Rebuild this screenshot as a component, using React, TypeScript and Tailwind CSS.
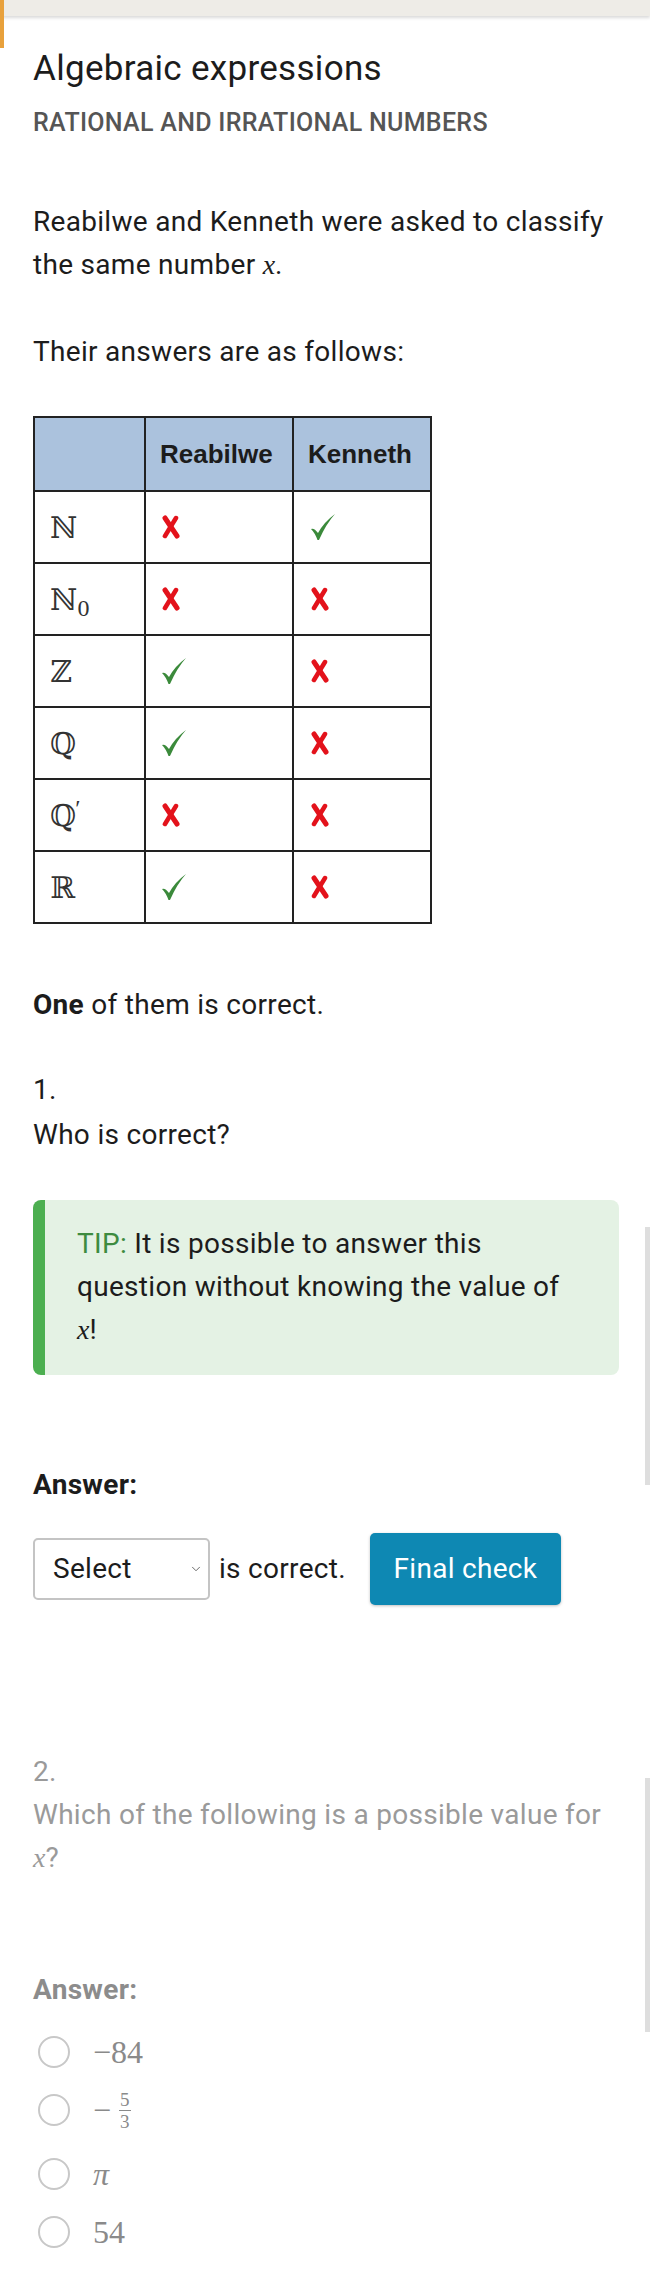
import { ChevronDown } from "lucide-react";

const Cross = () => (
  <svg width="20" height="24" viewBox="0 0 20 24" className="block">
    <path d="M4 3 L16 21" stroke="#e3121b" strokeWidth="5" strokeLinecap="round" />
    <path d="M15 3 L4 21" stroke="#e3121b" strokeWidth="4.5" strokeLinecap="round" />
  </svg>
);

const Check = () => (
  <svg width="26" height="28" viewBox="0 0 26 28" className="block">
    <path
      d="M1 16 Q4 14.5 8 20 Q14 9 25 1 Q16 11 9 27 L7.5 27 Q5 20 1 16 Z"
      fill="#3b8a3b"
    />
  </svg>
);

const rows: { sym: React.ReactNode; r: boolean; k: boolean }[] = [
  { sym: "ℕ", r: false, k: true },
  {
    sym: (
      <>
        ℕ<span className="font-['Liberation_Serif',serif] text-[24px] relative top-[6px]">0</span>
      </>
    ),
    r: false,
    k: false,
  },
  { sym: "ℤ", r: true, k: false },
  { sym: "ℚ", r: true, k: false },
  {
    sym: (
      <>
        ℚ<span className="font-['Liberation_Serif',serif] text-[24px] relative -top-[10px] -ml-[1px]">′</span>
      </>
    ),
    r: false,
    k: false,
  },
  { sym: "ℝ", r: true, k: false },
];

const X = () => <span className="font-['Liberation_Serif',serif] italic tracking-normal">x</span>;

const Radio = ({ children, h }: { children: React.ReactNode; h: string }) => (
  <div className={`flex items-center pl-[5px] ${h}`}>
    <span className="size-[32px] rounded-full border-2 border-[#c8c8c8] bg-white shrink-0" />
    <span className="ml-[23px] font-['Liberation_Serif',serif] text-[32px] leading-none text-[#8a8a8a]">
      {children}
    </span>
  </div>
);

export default function App() {
  return (
    <div className="relative w-[650px] min-h-[2270px] bg-white font-['Roboto',sans-serif] text-[#1c1c1c]">
      {/* top bar */}
      <div className="h-4 bg-[#eeece7] shadow-[0_2px_3px_rgba(0,0,0,0.15)]" />
      <div className="absolute left-0 top-0 w-[4px] h-[48px] bg-[#e8a13c]" />

      {/* scrollbar traces */}
      <div className="absolute right-0 top-[1227px] h-[258px] w-[5px] bg-[#dedede]" />
      <div className="absolute right-0 top-[1778px] h-[254px] w-[5px] bg-[#dedede]" />

      <div className="px-[33px] tracking-[0.3px]">
        <h1 className="mt-[33px] text-[35px] leading-[40px] font-normal">Algebraic expressions</h1>
        <h2 className="mt-[19px] text-[25px] leading-[30px] font-medium text-[#555] uppercase">
          Rational and irrational numbers
        </h2>

        <p className="mt-[62px] text-[28px] leading-[43px]">
          Reabilwe and Kenneth were asked to classify the same number <X />.
        </p>
        <p className="mt-[44px] text-[28px] leading-[43px]">Their answers are as follows:</p>

        {/* table */}
        <table className="mt-[43px] border-collapse border-2 border-[#222] w-[399px] font-['Liberation_Sans',sans-serif] tracking-normal">
          <thead>
            <tr className="h-[74px] bg-[#abc2dd]">
              <th className="w-[111px] border-2 border-[#222]" />
              <th className="w-[148px] border-2 border-[#222] text-left pl-[14px] text-[26px] font-bold">
                Reabilwe
              </th>
              <th className="border-2 border-[#222] text-left pl-[14px] text-[26px] font-bold">Kenneth</th>
            </tr>
          </thead>
          <tbody>
            {rows.map((row, i) => (
              <tr key={i} className="h-[72px]">
                <td className="border-2 border-[#222] pl-[15px] font-['DejaVu_Serif',serif] text-[30px] text-[#333]">
                  {row.sym}
                </td>
                <td className="border-2 border-[#222] pl-[15px]">{row.r ? <Check /> : <Cross />}</td>
                <td className="border-2 border-[#222] pl-[16px]">{row.k ? <Check /> : <Cross />}</td>
              </tr>
            ))}
          </tbody>
        </table>

        <p className="mt-[59px] text-[28px] leading-[43px]">
          <span className="font-bold">One</span> of them is correct.
        </p>

        <p className="mt-[42px] text-[28px] leading-[43px]">1.</p>
        <p className="mt-[2px] text-[28px] leading-[43px]">Who is correct?</p>

        {/* tip */}
        <div className="mt-[44px] w-[586px] rounded-lg bg-[#e4f2e4] border-l-[12px] border-[#4caf50] pl-[32px] pr-[40px] pt-[22px] pb-[24px]">
          <p className="text-[28px] leading-[43px]">
            <span className="text-[#3d8b40]">TIP:</span> It is possible to answer this question without knowing the
            value of <X />!
          </p>
        </div>

        <p className="mt-[88px] text-[28px] leading-[43px] font-bold">Answer:</p>

        <div className="mt-[27px] flex items-center">
          <div className="w-[177px] h-[62px] rounded-[5px] border-2 border-[#c4c4c4] flex items-center justify-between pl-[18px] pr-[5px]">
            <span className="text-[28px]">Select</span>
            <ChevronDown size={14} strokeWidth={1.5} className="text-[#555]" />
          </div>
          <span className="ml-[9px] text-[28px]">is correct.</span>
          <button className="ml-[24px] w-[191px] h-[72px] rounded-[5px] bg-[#0e88b3] text-white text-[28px] tracking-[0.3px] shadow-[0_1px_3px_rgba(0,0,0,0.25)]">
            Final check
          </button>
        </div>

        {/* question 2 */}
        <div className="text-[#9a9a9a]">
          <p className="mt-[145px] text-[28px] leading-[43px]">2.</p>
          <p className="text-[28px] leading-[43px]">
            Which of the following is a possible value for <X />?
          </p>

          <p className="mt-[89px] text-[28px] leading-[43px] font-bold text-[#8c8c8c]">Answer:</p>

          <div className="mt-[15px] flex flex-col tracking-normal">
            <Radio h="h-[52px]">−84</Radio>
            <Radio h="h-[64px]">
              <span className="inline-flex items-center">
                <span className="mr-[8px]">−</span>
                <span className="inline-flex flex-col items-center text-[19px] leading-[19px]">
                  <span className="px-[1px]">5</span>
                  <span className="w-full border-t border-[#8a8a8a] my-[1px]" />
                  <span className="px-[1px]">3</span>
                </span>
              </span>
            </Radio>
            <Radio h="h-[64px]">
              <span className="italic">π</span>
            </Radio>
            <Radio h="h-[52px]">54</Radio>
          </div>
        </div>
      </div>
    </div>
  );
}
